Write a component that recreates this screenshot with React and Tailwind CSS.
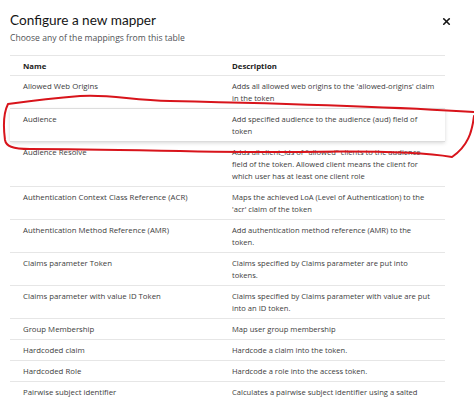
import { X } from 'lucide-react';

const rows = [
  ['Allowed Web Origins', ["Adds all allowed web origins to the 'allowed-origins' claim", 'in the token']],
  ['Audience', ['Add specified audience to the audience (aud) field of', 'token'], true],
  [
    'Audience Resolve',
    [
      'Adds all client_ids of "allowed" clients to the audience',
      'field of the token. Allowed client means the client for',
      'which user has at least one client role',
    ],
  ],
  ['Authentication Context Class Reference (ACR)', ['Maps the achieved LoA (Level of Authentication) to the', "'acr' claim of the token"]],
  ['Authentication Method Reference (AMR)', ['Add authentication method reference (AMR) to the', 'token.']],
  ['Claims parameter Token', ['Claims specified by Claims parameter are put into', 'tokens.']],
  ['Claims parameter with value ID Token', ['Claims specified by Claims parameter with value are put', 'into an ID token.']],
  ['Group Membership', ['Map user group membership']],
  ['Hardcoded claim', ['Hardcode a claim into the token.']],
  ['Hardcoded Role', ['Hardcode a role into the access token.']],
  ['Pairwise subject identifier', ['Calculates a pairwise subject identifier using a salted', 'sha-256 hash.']],
];

export default function App() {
  return (
    <div
      className="relative w-[474px] h-[400px] overflow-hidden bg-white text-[#151515]"
      style={{ fontFamily: '"Open Sans", Lato, sans-serif' }}
    >
      <div className="px-[10px] pt-[12px]">
        <div className="flex items-start justify-between">
          <h1
            className="text-[13.6px] leading-[16px] font-normal text-[#151515]"
            style={{ fontFamily: 'Lato, "Open Sans", sans-serif' }}
          >
            Configure a new mapper
          </h1>
          <X size={11} strokeWidth={3.5} className="mt-[4px] mr-[12px] text-[#151515]" />
        </div>
        <p className="mt-[4px] text-[8.6px] leading-[12px] text-[#4f5255]">Choose any of the mappings from this table</p>

        <div className="mt-[11px] w-[435px] border-t border-[#e6e6e6]">
          <div className="grid grid-cols-[222px_1fr] border-b border-[#e6e6e6] py-[3.5px] text-[7.8px] leading-[12px] font-bold text-[#222]">
            <div className="pl-[13px]">Name</div>
            <div>Description</div>
          </div>
          {rows.map(([name, lines, hl]) => (
            <div
              key={name}
              className={
                'grid grid-cols-[222px_1fr] py-[4px] text-[7.8px] leading-[12px] text-[#3c3c3c] ' +
                (hl
                  ? 'relative bg-white shadow-[0_1px_4px_rgba(0,0,0,0.16)] border-b border-[#dcdcdc]'
                  : 'border-b border-[#e6e6e6]')
              }
            >
              <div className="pl-[13px]">{name}</div>
              <div className="text-[7.6px]">
                {lines.map((l) => (
                  <div key={l} className="whitespace-nowrap">{l}</div>
                ))}
              </div>
            </div>
          ))}
        </div>
      </div>

      <svg className="absolute left-0 top-0 pointer-events-none" width="474" height="400" viewBox="0 0 474 400">
        <path
          d="M 8 104 C 30 101, 55 98, 80 96 C 110 94, 130 100, 170 101 C 260 103, 380 106, 474 112 M 474 116 C 472 132, 468 146, 452 157 C 420 152, 360 151, 300 152 C 230 153, 120 149, 30 149 C 12 149, 6 146, 5 140 C 3 125, 4 112, 8 104"
          fill="none"
          stroke="#d8141b"
          strokeWidth="2"
          strokeLinecap="round"
        />
      </svg>
    </div>
  );
}
